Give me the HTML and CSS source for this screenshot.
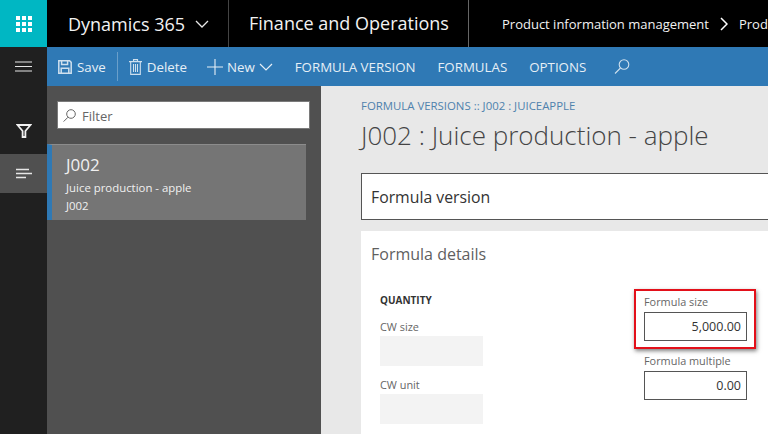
FILE: index.html
```html
<!doctype html>
<html lang="en">
<head>
<title>J002 : Juice production - apple</title>
<meta charset="UTF-8">
<link rel="stylesheet" href="styles.css">
</head>
<body>

<div class="topbar">
  <div class="waffle">
    <svg width="18" height="18" viewBox="0 0 18 18" fill="#fff">
      <rect x="1" y="1" width="4" height="4"/><rect x="7" y="1" width="4" height="4"/><rect x="13" y="1" width="4" height="4"/>
      <rect x="1" y="7" width="4" height="4"/><rect x="7" y="7" width="4" height="4"/><rect x="13" y="7" width="4" height="4"/>
      <rect x="1" y="13" width="4" height="4"/><rect x="7" y="13" width="4" height="4"/><rect x="13" y="13" width="4" height="4"/>
    </svg>
  </div>
  <div class="brand">
    <span>Dynamics 365</span>
    <svg width="14" height="8" viewBox="0 0 14 8" fill="none" stroke="#e8e8e8" stroke-width="1.3"><path d="M1 1l6 6 6-6"/></svg>
  </div>
  <div class="appname">Finance and Operations</div>
  <div class="crumbs">
    <span>Product information management</span>
    <svg width="8" height="14" viewBox="0 0 8 14" fill="none" stroke="#fff" stroke-width="1.5"><path d="M1 1l6 6-6 6"/></svg>
    <span>Prod</span>
  </div>
</div>

<div class="shell">
  <div class="rail">
    <div class="rail-btn">
      <svg width="17" height="11" viewBox="0 0 17 11" stroke="#e6e6e6" stroke-width="1.2"><path d="M0 1h17M0 5.500h17M0 10h17"/></svg>
    </div>
    <div class="rail-btn filter-btn">
      <svg width="16" height="14" viewBox="0 0 16 14" fill="none" stroke="#f0f0f0" stroke-width="1.800"><path d="M1.500 1h13L9.400 7v6H6.600V7z"/></svg>
    </div>
    <div class="rail-btn on">
      <svg width="16" height="11" viewBox="0 0 16 11" stroke="#e6e6e6" stroke-width="1.600"><path d="M0 1.500h13M0 5.500h16M0 9.500h10"/></svg>
    </div>
  </div>

  <div class="work">
    <div class="cmdbar">
      <div class="cmd">
        <svg width="14" height="14" viewBox="0 0 14 14" fill="none" stroke="#cfe0ee" stroke-width="1.500"><path d="M.8.8h10.800l1.600 1.600v10.800H.8z"/><path d="M3.600.8v3.800h6V.8M3.200 13.200V8.200h7.600v5"/></svg>
        <span>Save</span>
      </div>
      <div class="cmd-sep"></div>
      <div class="cmd">
        <svg width="13" height="16" viewBox="0 0 13 16" fill="none" stroke="#cfe0ee" stroke-width="1.100"><path d="M0 2.600h13M4.500 2.600V.6h4v2M1.700 2.600v12.800h9.600V2.600M4.500 5v8M6.500 5v8M8.500 5v8"/></svg>
        <span>Delete</span>
      </div>
      <div class="cmd cmd-new">
        <svg width="16" height="16" viewBox="0 0 16 16" stroke="#e6eff6" stroke-width="1.100"><path d="M0 8h16M8 0v16"/></svg>
        <span>New</span>
        <svg width="14" height="8" viewBox="0 0 14 8" fill="none" stroke="#e6eff6" stroke-width="1.200"><path d="M1 1l6 6 6-6"/></svg>
      </div>
      <div class="cmd-tab">FORMULA VERSION</div>
      <div class="cmd-tab">FORMULAS</div>
      <div class="cmd-tab">OPTIONS</div>
      <svg class="cmd-search" width="16" height="15" viewBox="0 0 16 15" fill="none" stroke="#cfe0ee" stroke-width="1.100"><circle cx="10" cy="5.500" r="4.800"/><path d="M6.500 9L1 14.500"/></svg>
    </div>

    <div class="panes">
      <div class="listpane">
        <div class="filter">
          <svg width="13" height="13" viewBox="0 0 13 13" fill="none" stroke="#666" stroke-width="1"><circle cx="8" cy="5" r="4.300"/><path d="M5 8.200L.6 12.600"/></svg>
          <span>Filter</span>
        </div>
        <div class="listitem">
          <div class="item-id">J002</div>
          <div class="item-line">Juice production - apple</div>
          <div class="item-line">J002</div>
        </div>
      </div>

      <div class="content">
        <div class="crumb">FORMULA VERSIONS :: J002 : JUICEAPPLE</div>
        <h1 class="title">J002 : Juice production - apple</h1>
        <div class="tabhead">Formula version</div>
        <div class="card">
          <div class="card-title">Formula details</div>
          <div class="cols">
            <div class="col col-left">
              <div class="group">QUANTITY</div>
              <div class="field">
                <label>CW size</label>
                <div class="blank"></div>
              </div>
              <div class="field">
                <label>CW unit</label>
                <div class="blank"></div>
              </div>
            </div>
            <div class="col col-right">
              <div class="field hilite">
                <label>Formula size</label>
                <div class="num">5,000.00</div>
              </div>
              <div class="field">
                <label>Formula multiple</label>
                <div class="num">0.00</div>
              </div>
            </div>
          </div>
        </div>
      </div>
    </div>
  </div>
</div>

</body>
</html>
```

FILE: styles.css
```css
* {
  box-sizing: border-box;
}

html, body {
  margin: 0;
  height: 100%;
  overflow: hidden;
}

body {
  width: 768px;
  height: 434px;
  font-family: "Open Sans", "Noto Sans", sans-serif;
  display: flex;
  flex-direction: column;
  background: #e8e8e8;
}

/* top bar */
.topbar {
  height: 47px;
  flex: none;
  display: flex;
  align-items: center;
  background: #000;
  color: #f2f2f2;
  white-space: nowrap;
  overflow: hidden;
}

.waffle {
  width: 47px;
  height: 47px;
  flex: none;
  background: #00b7c3;
  display: flex;
  align-items: center;
  justify-content: center;
}

.brand {
  width: 182px;
  height: 47px;
  flex: none;
  padding-left: 21px;
  display: flex;
  align-items: center;
  gap: 10px;
  font-size: 18px;
  border-right: 1px solid #444;
}

.appname {
  width: 240px;
  height: 47px;
  flex: none;
  padding-left: 20px;
  line-height: 47px;
  font-size: 18px;
  border-right: 1px solid #666;
}

.crumbs {
  padding-left: 33px;
  display: flex;
  align-items: center;
  gap: 11px;
  font-size: 13px;
}

/* left rail */
.shell {
  flex: 1;
  display: flex;
  min-height: 0;
}

.rail {
  width: 47px;
  flex: none;
  background: #202020;
}

.rail-btn {
  height: 39px;
  display: flex;
  align-items: center;
  justify-content: center;
}

.filter-btn {
  margin-top: 25px;
}

.rail-btn.on {
  background: #505050;
  margin-top: 4px;
}

/* command bar */
.work {
  flex: 1;
  min-width: 0;
  display: flex;
  flex-direction: column;
}

.cmdbar {
  height: 39px;
  flex: none;
  display: flex;
  align-items: center;
  padding-left: 11px;
  background: #2f79b5;
  color: #e6eff6;
  font-size: 13.3px;
  white-space: nowrap;
}

.cmd {
  display: flex;
  align-items: center;
  gap: 5px;
}

.cmd-sep {
  width: 1px;
  height: 29px;
  margin: 0 11px;
  background: #6a9fca;
}

.cmd-new {
  margin-left: 20px;
  gap: 4px;
}

.cmd-tab {
  margin-left: 22px;
}

.cmd-search {
  margin-left: 28px;
}

/* list pane */
.panes {
  flex: 1;
  min-height: 0;
  display: flex;
}

.listpane {
  width: 274px;
  flex: none;
  background: #505050;
  padding-top: 15px;
}

.filter {
  width: 253px;
  height: 28px;
  margin-left: 10px;
  padding: 1px 0 0 5px;
  display: flex;
  align-items: center;
  gap: 6px;
  background: #fff;
  border: 1px solid #7a7a7a;
  color: #666;
  font-size: 13px;
}

.listitem {
  width: 259px;
  height: 76px;
  margin-top: 15px;
  padding: 6px 0 0 14px;
  background: #757575;
  border-left: 5px solid #2f79b5;
  border-top: 1px solid #8c8c8c;
  color: #f0f0f0;
}

.item-id {
  margin-bottom: 1px;
  font-size: 17px;
  line-height: 27px;
}

.item-line {
  font-size: 11.4px;
  line-height: 18px;
}

/* form */
.content {
  flex: 1;
  min-width: 0;
  padding: 12px 0 0 40px;
  overflow: hidden;
}

.crumb {
  font-size: 11.4px;
  line-height: 15px;
  color: #4f82ad;
  white-space: nowrap;
}

.title {
  margin: 4px 0 0;
  font-size: 26px;
  line-height: 36px;
  font-weight: 300;
  color: #444;
  white-space: nowrap;
}

.tabhead {
  height: 47px;
  margin-top: 20px;
  padding-left: 9px;
  line-height: 46px;
  font-size: 15.8px;
  color: #333;
  background: #fff;
  border: 1px solid #555;
  border-right: 0;
}

.card {
  height: 210px;
  margin-top: 11px;
  padding: 11px 0 0 10px;
  background: #fff;
}

.card-title {
  font-size: 16px;
  line-height: 24px;
  color: #5f5f5f;
}

.cols {
  display: flex;
  margin-top: 28px;
}

.col-left {
  width: 273px;
  margin-top: -2px;
  padding-left: 9px;
}

.group {
  font-size: 10px;
  font-weight: 700;
  line-height: 16px;
  color: #333;
}

.field label {
  display: block;
  margin-bottom: 2px;
  font-size: 10.9px;
  line-height: 16px;
  color: #666;
}

.col-left .field {
  margin-top: 11px;
}

.col-left .field label {
  margin-bottom: 1px;
}

.blank {
  width: 103px;
  height: 30px;
  background: #f3f3f3;
}

.col-right .field + .field {
  margin-top: 12px;
}

.num {
  width: 103px;
  height: 29px;
  padding-right: 5px;
  text-align: right;
  font-size: 12.5px;
  line-height: 27px;
  color: #333;
  border: 1px solid #555;
}

/* red callout round the formula size field */
.hilite {
  position: relative;
}

.hilite::after {
  content: "";
  box-sizing: border-box;
  position: absolute;
  left: -10px;
  top: -5px;
  width: 122px;
  height: 60px;
  border: 2px solid #e3101a;
  box-shadow: 1px 2px 4px rgba(0, 0, 0, 0.5);
}
```
